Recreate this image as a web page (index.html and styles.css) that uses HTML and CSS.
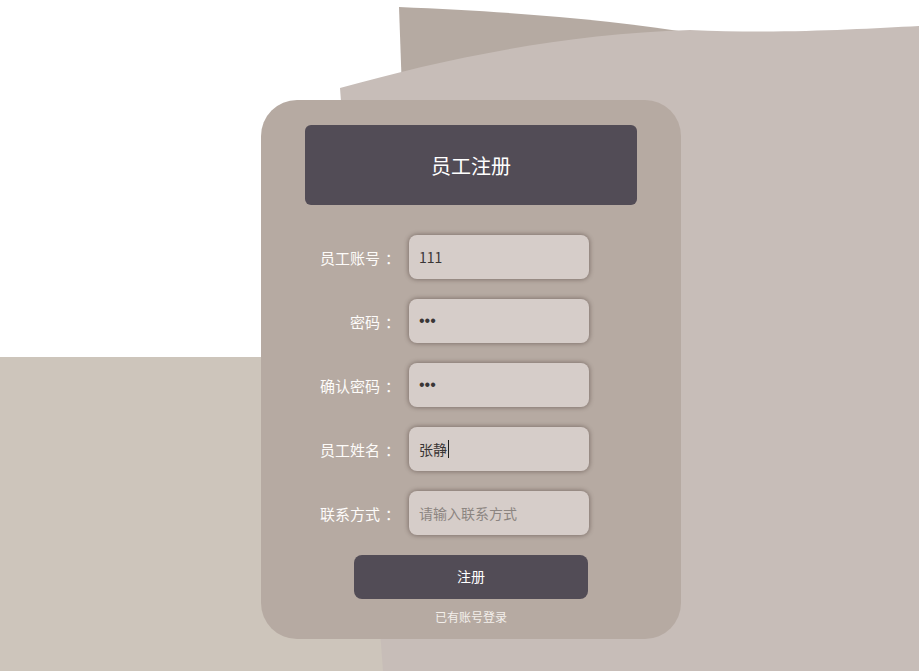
FILE: index.html
```html
<!DOCTYPE html>
<html lang="zh-CN">
<head>
<meta charset="utf-8">
<title>员工注册</title>
<link rel="stylesheet" href="styles.css">
</head>
<body>
<div class="page">
  <svg class="backdrop" width="919" height="671" viewBox="0 0 919 671" aria-hidden="true">
    <rect x="0" y="357" width="919" height="314" fill="#cdc5bb"/>
    <path d="M399,7 C 520,12 610,20 700,34 L 700,120 L 403,120 Z" fill="#b5aaa2"/>
    <path d="M340,88 C 440,60 560,34 690,30 C 780,34 860,29 919,26 L 919,671 L 383,671 Z" fill="#c7bdb8"/>
  </svg>
  <div class="card">
    <div class="card-head">员工注册</div>
    <form class="form">
      <label class="row"><span class="lbl">员工账号<span class="colon">：</span></span><input class="field" type="text" value="111"></label>
      <label class="row"><span class="lbl">密码<span class="colon">：</span></span><input class="field pwd" type="password" value="111"></label>
      <label class="row"><span class="lbl">确认密码<span class="colon">：</span></span><input class="field pwd" type="password" value="111"></label>
      <label class="row"><span class="lbl">员工姓名<span class="colon">：</span></span><span class="field-wrap"><input class="field" type="text" value="张静"><span class="caret"></span></span></label>
      <label class="row"><span class="lbl">联系方式<span class="colon">：</span></span><input class="field" type="text" placeholder="请输入联系方式"></label>
      <button class="submit" type="button">注册</button>
      <a class="login" href="#">已有账号登录</a>
    </form>
  </div>
</div>
</body>
</html>
```

FILE: styles.css
```css
* { box-sizing: border-box; }
html, body { margin: 0; padding: 0; }
body {
  background: #ffffff;
  font-family: "Noto Sans CJK SC", "Noto Sans", sans-serif;
  overflow: hidden;
}
.page {
  position: relative;
  width: 919px;
  height: 671px;
  padding: 100px 0 0 261px;
}
.backdrop {
  position: absolute;
  left: 0;
  top: 0;
  z-index: 0;
}
.card {
  position: relative;
  z-index: 1;
  width: 420px;
  height: 539px;
  background: #b6aaa2;
  border-radius: 36px;
  padding-top: 25px;
}
.card-head {
  margin: 0 44px;
  height: 80px;
  background: #524c56;
  border-radius: 6px;
  color: #ffffff;
  font-size: 20px;
  display: flex;
  align-items: center;
  justify-content: center;
}
.form {
  display: flex;
  flex-direction: column;
  margin-top: 30px;
}
.row {
  display: flex;
  align-items: center;
  height: 44px;
  margin-bottom: 20px;
}
.lbl {
  width: 134px;
  text-align: right;
  color: #fdfbf9;
  font-size: 15px;
}
.colon {
  display: inline-block;
  padding-left: 5px;
  margin-right: -5px;
}
.field-wrap {
  position: relative;
  display: block;
  margin-left: 14px;
}
.field-wrap .field { margin-left: 0; }
.field {
  display: block;
  margin-left: 14px;
  width: 180px;
  height: 44px;
  border: none;
  outline: none;
  border-radius: 8px;
  background: #d6cdc9;
  box-shadow: 0 0 4px 1px rgba(70, 55, 50, 0.45);
  padding: 0 10px;
  font-family: "Noto Sans CJK SC", "Noto Sans", sans-serif;
  font-size: 14px;
  color: #3a3636;
}
.field.pwd {
  font-family: "Liberation Sans", "DejaVu Sans", sans-serif;
  font-size: 16px;
  letter-spacing: 0;
  color: #3a3636;
}
.field::placeholder {
  color: #8c8581;
  font-size: 14px;
}
.caret {
  position: absolute;
  left: 39px;
  top: 13px;
  width: 1px;
  height: 18px;
  background: #222;
}
.submit {
  margin: 0 0 0 93px;
  width: 234px;
  height: 44px;
  border: none;
  border-radius: 8px;
  background: #524c56;
  color: #ffffff;
  font-family: "Noto Sans CJK SC", "Noto Sans", sans-serif;
  font-size: 14px;
  line-height: 1;
  padding: 0 0 3px;
}
.login {
  align-self: center;
  margin-top: 9px;
  color: #f3efeb;
  font-size: 12px;
  text-decoration: none;
}
```
